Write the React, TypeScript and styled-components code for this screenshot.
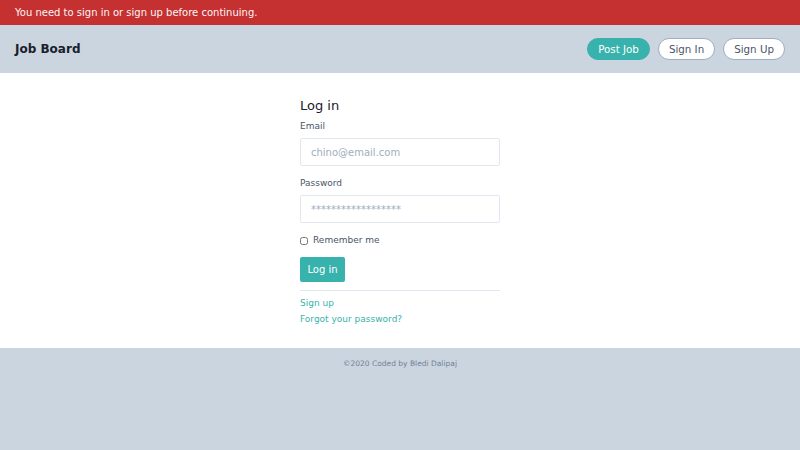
import styled, { createGlobalStyle } from "styled-components";

const GlobalStyle = createGlobalStyle`
  html, body {
    margin: 0;
    padding: 0;
    background: #cbd5e0;
    font-family: "DejaVu Sans", "Liberation Sans", sans-serif;
  }
  * { box-sizing: border-box; }
`;

const Page = styled.div`
  display: flex;
  flex-direction: column;
  min-height: 450px;
  background: #cbd5e0;
`;

const Flash = styled.div`
  height: 25px;
  background: #c53030;
  color: #fff5f5;
  font-size: 10px;
  padding: 0 15px;
  display: flex;
  align-items: center;
`;

const Header = styled.header`
  height: 48px;
  background: #cbd5e0;
  display: flex;
  align-items: center;
  justify-content: space-between;
  padding: 0 15px;
`;

const Brand = styled.div`
  font-weight: bold;
  font-size: 12px;
  color: #1a202c;
`;

const Nav = styled.nav`
  display: flex;
  gap: 8px;
`;

const NavButton = styled.a<{ $primary?: boolean }>`
  height: 22px;
  padding: 0 10px;
  border-radius: 11px;
  font-size: 10.3px;
  display: flex;
  align-items: center;
  background: ${(p) => (p.$primary ? "#38b2ac" : "#ffffff")};
  color: ${(p) => (p.$primary ? "#ffffff" : "#4a5568")};
  border: 1px solid ${(p) => (p.$primary ? "#38b2ac" : "#a0aec0")};
`;

const Main = styled.main`
  background: #ffffff;
  height: 275px;
  display: flex;
  justify-content: center;
  padding-top: 25px;
`;

const Form = styled.form`
  width: 200px;
  display: flex;
  flex-direction: column;
`;

const Title = styled.h2`
  margin: 0 0 8px;
  font-size: 13px;
  line-height: 15px;
  font-weight: normal;
  color: #1a202c;
`;

const Label = styled.label`
  font-size: 9px;
  line-height: 11px;
  color: #4a5568;
  margin-bottom: 6px;
`;

const Input = styled.input`
  width: 200px;
  height: 28px;
  border: 1px solid #e2e8f0;
  border-radius: 2px;
  padding: 0 10px;
  font-family: inherit;
  font-size: 10px;
  color: #4a5568;
  margin-bottom: 12px;
  &::placeholder { color: #a0aec0; }
`;

const Remember = styled.label`
  display: flex;
  align-items: center;
  gap: 5px;
  font-size: 9px;
  line-height: 11px;
  color: #4a5568;
  margin: 0 0 11px;
  input {
    margin: 0;
    width: 8px;
    height: 8px;
  }
`;

const Submit = styled.button`
  align-self: flex-start;
  width: 45px;
  height: 25px;
  padding: 0;
  background: #38b2ac;
  color: #ffffff;
  border: none;
  border-radius: 2px;
  font-family: inherit;
  font-size: 10px;
`;

const Divider = styled.hr`
  width: 100%;
  border: none;
  border-top: 1px solid #e2e8f0;
  margin: 8px 0 4px;
`;

const Link = styled.a`
  font-size: 9px;
  color: #38b2ac;
  line-height: 16px;
`;

const Footer = styled.footer`
  text-align: center;
  font-size: 7.5px;
  color: #718096;
  padding-top: 11px;
`;

export default function App() {
  return (
    <Page>
      <GlobalStyle />
      <Flash>You need to sign in or sign up before continuing.</Flash>
      <Header>
        <Brand>Job Board</Brand>
        <Nav>
          <NavButton $primary>Post Job</NavButton>
          <NavButton>Sign In</NavButton>
          <NavButton>Sign Up</NavButton>
        </Nav>
      </Header>
      <Main>
        <Form onSubmit={(e) => e.preventDefault()}>
          <Title>Log in</Title>
          <Label>Email</Label>
          <Input type="email" placeholder="chino@email.com" />
          <Label>Password</Label>
          <Input type="password" placeholder="******************" />
          <Remember>
            <input type="checkbox" />
            Remember me
          </Remember>
          <Submit type="submit">Log in</Submit>
          <Divider />
          <Link>Sign up</Link>
          <Link>Forgot your password?</Link>
        </Form>
      </Main>
      <Footer>©2020 Coded by Bledi Dalipaj</Footer>
    </Page>
  );
}
